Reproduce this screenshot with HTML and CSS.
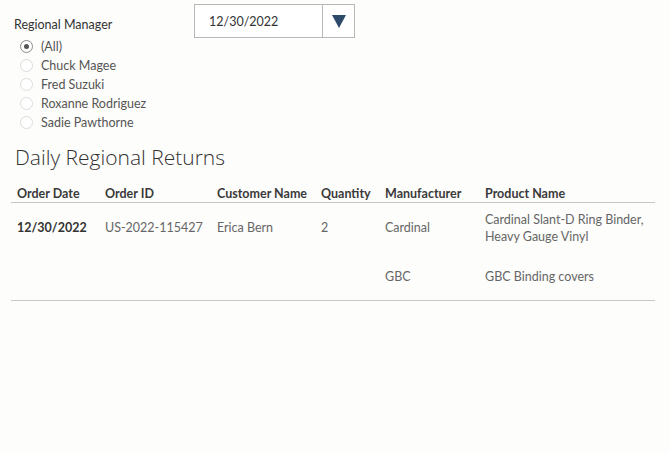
FILE: index.html
```html
<!DOCTYPE html>
<html>
<head>
<meta charset="utf-8">
<link rel="stylesheet" href="styles.css">
</head>
<body>
<div class="page">
  <div class="top">
    <div class="filter">
      <div class="filter-title">Regional Manager</div>
      <ul class="radios">
        <li><span class="radio on"></span>(All)</li>
        <li><span class="radio"></span>Chuck Magee</li>
        <li><span class="radio"></span>Fred Suzuki</li>
        <li><span class="radio"></span>Roxanne Rodriguez</li>
        <li><span class="radio"></span>Sadie Pawthorne</li>
      </ul>
    </div>
    <div class="datebox">
      <div class="date-value">12/30/2022</div>
      <div class="date-btn"><svg width="14" height="14" viewBox="0 0 14 14"><polygon points="0,1 14,1 7,14" fill="#2e4a6b"/></svg></div>
    </div>
  </div>
  <h1 class="title">Daily Regional Returns</h1>
  <div class="table">
    <div class="th">Order Date</div>
    <div class="th">Order ID</div>
    <div class="th">Customer Name</div>
    <div class="th">Quantity</div>
    <div class="th">Manufacturer</div>
    <div class="th">Product Name</div>

    <div class="td bold">12/30/2022</div>
    <div class="td">US-2022-115427</div>
    <div class="td">Erica Bern</div>
    <div class="td">2</div>
    <div class="td">Cardinal</div>
    <div class="td">Cardinal Slant-D Ring Binder,<br>Heavy Gauge Vinyl</div>

    <div class="td last"></div>
    <div class="td last"></div>
    <div class="td last"></div>
    <div class="td last"></div>
    <div class="td last">GBC</div>
    <div class="td last">GBC Binding covers</div>
  </div>
</div>
</body>
</html>
```
FILE: styles.css
```css
html, body {
  margin: 0;
  padding: 0;
  background: #fdfdfb;
}
body {
  font-family: "Lato", "Noto Sans", sans-serif;
  font-size: 12px;
  color: #555;
}
.page {
  width: 670px;
  height: 453px;
}
.top {
  display: flex;
  align-items: flex-start;
}
.filter {
  padding: 17px 0 0 14px;
  width: 180px;
}
.filter-title {
  color: #333;
  font-size: 12.5px;
  line-height: 16px;
  margin-bottom: 4px;
}
.radios {
  list-style: none;
  margin: 0;
  padding: 0 0 0 6px;
}
.radios li {
  display: flex;
  align-items: center;
  height: 19px;
  font-size: 12.5px;
  color: #555;
}
.radio {
  width: 13px;
  height: 13px;
  border: 1px solid #dcdcdc;
  border-radius: 50%;
  margin-right: 8px;
  box-sizing: border-box;
  position: relative;
  background: #fff;
}
.radio.on {
  border-color: #8a8a8a;
}
.radio.on::after {
  content: "";
  position: absolute;
  left: 3px;
  top: 3px;
  width: 5px;
  height: 5px;
  border-radius: 50%;
  background: #555;
}
.datebox {
  display: flex;
  margin-top: 4px;
  height: 34px;
  width: 161px;
  border: 1px solid #b8b8b8;
  box-sizing: border-box;
  background: #fff;
}
.date-value {
  flex: 1;
  display: flex;
  align-items: center;
  padding-left: 14px;
  font-size: 12.5px;
  color: #333;
}
.date-btn {
  width: 31px;
  border-left: 1px solid #b8b8b8;
  display: flex;
  align-items: center;
  justify-content: center;
}
.title {
  margin: 13px 0 0 15px;
  font-family: "Open Sans", "Lato", sans-serif;
  font-size: 21px;
  font-weight: 300;
  color: #333;
  line-height: 24px;
}
.table {
  margin: 15px 0 0 11px;
  width: 644px;
  display: grid;
  grid-template-columns: 88px 112px 104px 64px 100px 176px;
  grid-template-rows: 19px 49px 49px;
}
.th {
  padding-left: 6px;
  color: #3a3a3a;
  font-weight: bold;
  font-size: 12.5px;
  border-bottom: 1px solid #c8c8c8;
  display: flex;
  align-items: center;
}
.td {
  padding-left: 6px;
  display: flex;
  align-items: center;
  color: #666;
  font-size: 12.5px;
  line-height: 17px;
}
.td.bold {
  color: #333;
  font-weight: bold;
}
.td.last {
  border-bottom: 1px solid #c8c8c8;
}
```
